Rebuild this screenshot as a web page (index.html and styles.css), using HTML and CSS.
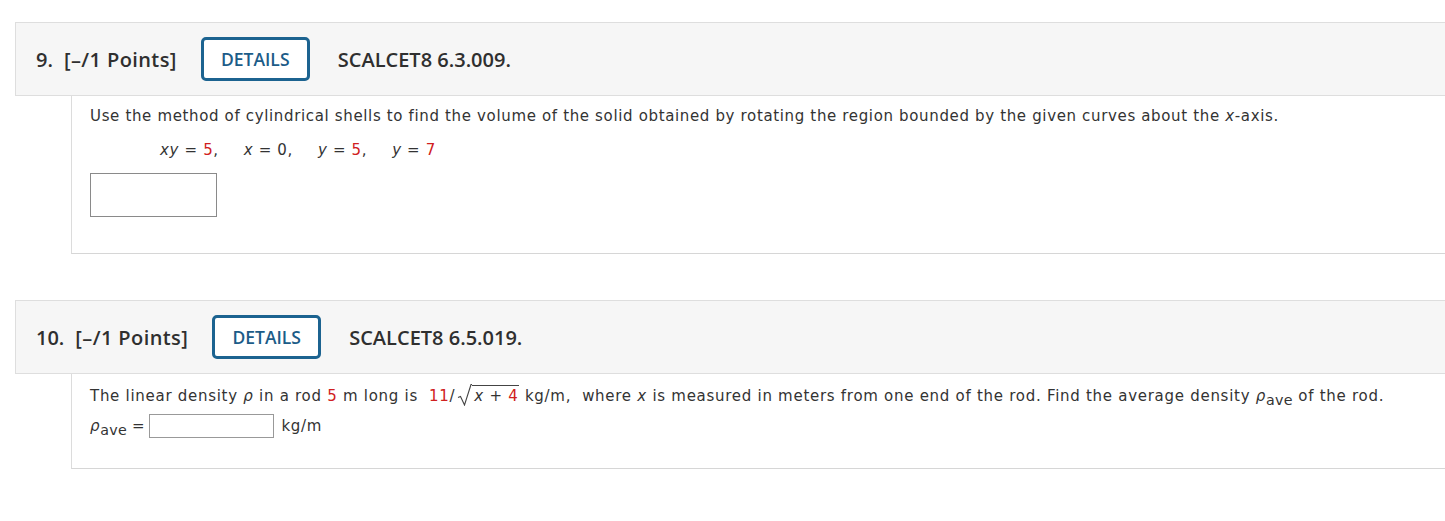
FILE: index.html
```html
<!DOCTYPE html>
<html>
<head>
<meta charset="utf-8">
<link rel="stylesheet" href="styles.css">
</head>
<body>
<div class="page">
  <section class="question">
    <div class="qhead">
      <span class="qnum">9.</span>
      <span class="qpts">[–/1 Points]</span>
      <button class="details">DETAILS</button>
      <span class="qcode">SCALCET8 6.3.009.</span>
    </div>
    <div class="qbody q1">
      <p class="line">Use the method of cylindrical shells to find the volume of the solid obtained by rotating the region bounded by the given curves about the <i>x</i>-axis.</p>
      <p class="line eq"><i>xy</i> = <span class="red">5</span>,<span class="sp"></span><i>x</i> = 0,<span class="sp"></span><i>y</i> = <span class="red">5</span>,<span class="sp"></span><i>y</i> = <span class="red">7</span></p>
      <div class="answer big"></div>
    </div>
  </section>

  <section class="question">
    <div class="qhead">
      <span class="qnum">10.</span>
      <span class="qpts">[–/1 Points]</span>
      <button class="details">DETAILS</button>
      <span class="qcode">SCALCET8 6.5.019.</span>
    </div>
    <div class="qbody q2">
      <p class="line fixed">The linear density <i>ρ</i> in a rod <span class="red">5</span> m long is &nbsp;<span class="red">11</span>/<span class="sqrt"><svg class="rad" width="15" height="22" viewBox="0 0 15 22"><path d="M1 13.5 L3.5 12.5 L7.5 21 L14 0.5 L15 0.5" fill="none" stroke="#444" stroke-width="1.1"/></svg><span class="under"><i>x</i> + <span class="red">4</span></span></span> kg/m,&nbsp; where <i>x</i> is measured in meters from one end of the rod. Find the average density <i>ρ</i><sub>ave</sub> of the rod.</p>
      <div class="line ansrow"><span class="pave"><i>ρ</i><sub>ave</sub></span> = <span class="answer small"></span> <span class="unit">kg/m</span></div>
    </div>
  </section>
</div>
</body>
</html>
```

FILE: styles.css
```css
html, body {
  margin: 0;
  padding: 0;
  background: #fff;
  overflow-x: hidden;
}
.page {
  padding: 22px 0 0 15px;
  font-family: "DejaVu Sans", Verdana, sans-serif;
  color: #333;
}
.question {
  margin-bottom: 46px;
}
.qhead {
  display: flex;
  align-items: center;
  height: 72px;
  background: #f6f6f6;
  border: 1px solid #dedede;
  border-right: none;
  padding-left: 20px;
  font-family: "Open Sans", sans-serif;
  font-weight: 600;
  font-size: 20px;
  color: #2f2f2f;
}
.qnum {
  margin-right: 11px;
}
.qpts {
  margin-right: 24px;
  letter-spacing: 0.4px;
}
.details {
  box-sizing: border-box;
  width: 109px;
  height: 44px;
  border: 3px solid #1c6390;
  border-radius: 5px;
  background: #fff;
  color: #1c5c88;
  font-family: "Open Sans", sans-serif;
  font-weight: 600;
  font-size: 17.5px;
  padding: 0;
  margin-right: 28px;
}
.qbody {
  margin-left: 56px;
  border-left: 1px solid #dcdcdc;
  border-bottom: 1px solid #d6d6d6;
  padding-left: 18px;
  font-size: 15px;
  letter-spacing: 0.65px;
}
.q1 {
  padding-top: 10px;
  padding-bottom: 36px;
}
.q2 {
  padding-top: 10px;
  padding-bottom: 30px;
  letter-spacing: 0.72px;
}
.line {
  margin: 0;
  line-height: 20px;
}
.fixed {
  height: 20px;
  white-space: nowrap;
}
.eq {
  margin-top: 14px;
  padding-left: 70px;
}
.sp {
  display: inline-block;
  width: 25px;
}
.red {
  color: #d02020;
}
.answer {
  display: block;
  box-sizing: border-box;
  border: 1px solid #8a8a8a;
  background: #fff;
}
.answer.big {
  margin-top: 13px;
  width: 127px;
  height: 44px;
}
.ansrow {
  display: flex;
  align-items: center;
  margin-top: 10px;
  height: 24px;
}
.answer.small {
  display: inline-block;
  width: 125px;
  height: 24px;
  margin: 0 7px 0 4px;
  border-color: #999;
}
.pave {
  margin-right: 5px;
}
sub {
  font-size: 0.95em;
  vertical-align: -4px;
  line-height: 0;
  letter-spacing: 0.3px;
}
.sqrt {
  display: inline-block;
  white-space: nowrap;
  vertical-align: bottom;
  line-height: 20px;
}
.rad {
  vertical-align: -5px;
  margin-left: 2px;
}
.under {
  border-top: 1.1px solid #444;
  padding: 1px 1px 0 2px;
}
```
